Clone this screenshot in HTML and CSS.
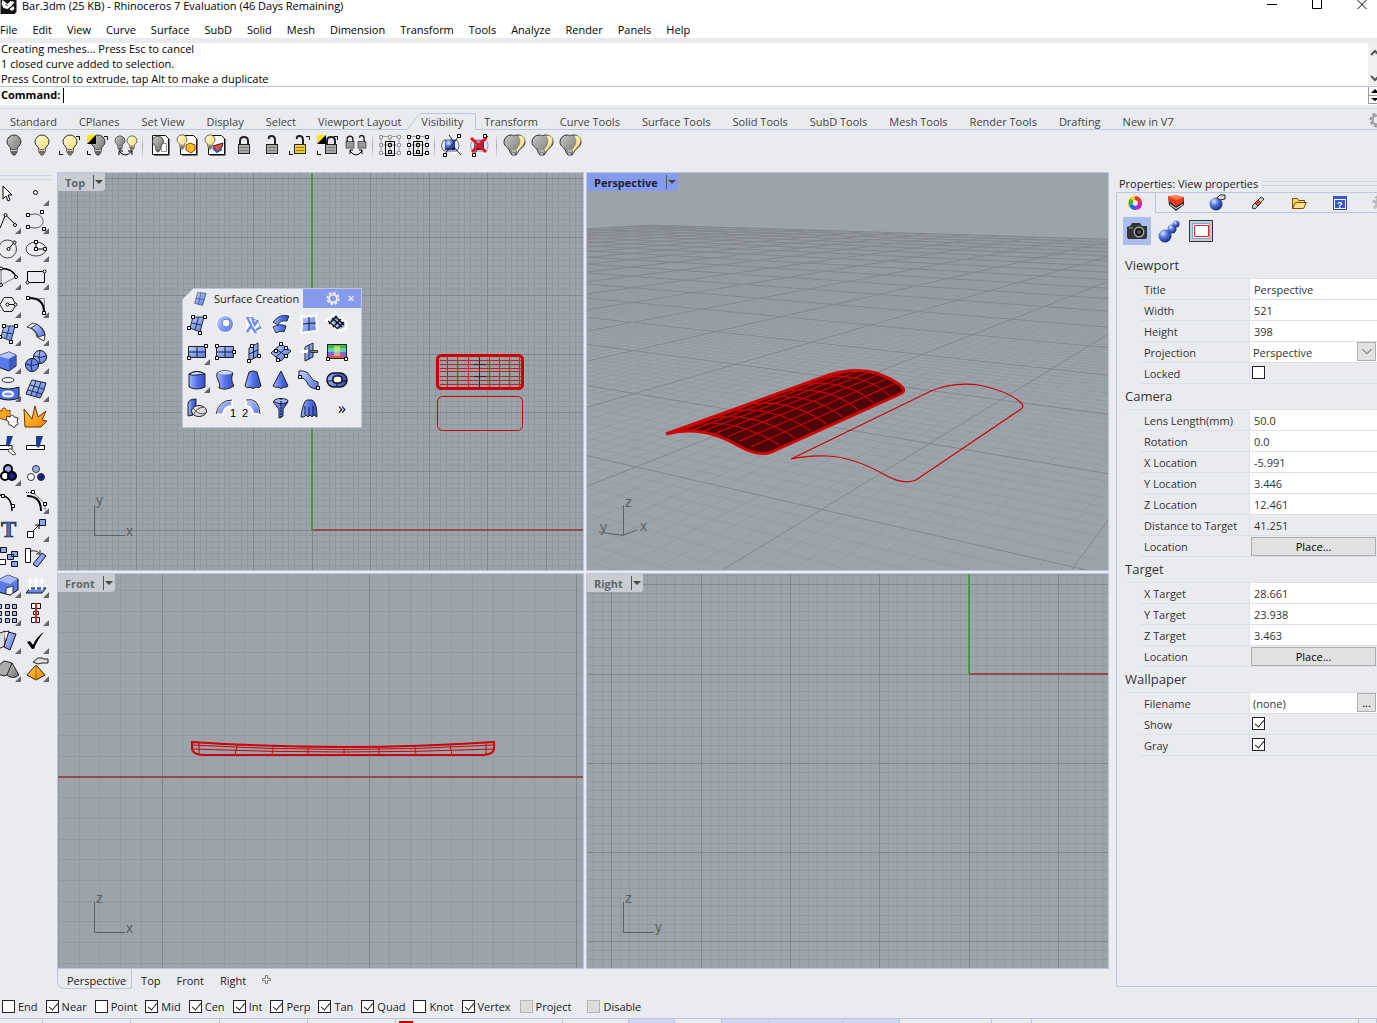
FILE: index.html
```html
<!DOCTYPE html>
<html lang="en">
<head>
<meta charset="utf-8">
<title>Bar.3dm (25 KB) - Rhinoceros 7 Evaluation</title>
<link rel="stylesheet" href="styles.css">
</head>
<body>
<svg class="defs" aria-hidden="true">
  <defs>
    <linearGradient id="blue" x1="0" y1="0" x2="1" y2="1"><stop offset="0" stop-color="#c3d0ff"/><stop offset="1" stop-color="#5474e6"/></linearGradient>
    <linearGradient id="deep" x1="0" y1="0" x2="1" y2="0"><stop offset="0" stop-color="#a5b8ff"/><stop offset=".5" stop-color="#5573e8"/><stop offset="1" stop-color="#314fc0"/></linearGradient>
    <linearGradient id="gray" x1="0" y1="0" x2="1" y2="1"><stop offset="0" stop-color="#c8c8c8"/><stop offset="1" stop-color="#6c6c6c"/></linearGradient>
    <linearGradient id="pale" x1="0" y1="0" x2="1" y2="1"><stop offset="0" stop-color="#fffbe0"/><stop offset="1" stop-color="#ffd65c"/></linearGradient>
    <linearGradient id="orange" x1="0" y1="0" x2="1" y2="1"><stop offset="0" stop-color="#ffd24a"/><stop offset="1" stop-color="#f08000"/></linearGradient>
    <radialGradient id="ball" cx=".35" cy=".3" r=".8"><stop offset="0" stop-color="#e3eaff"/><stop offset=".4" stop-color="#5577dd"/><stop offset="1" stop-color="#0b1c70"/></radialGradient>
  </defs>
  <symbol id="bulb" viewBox="0 0 28 28"><path d="M14 4a7 7 0 0 1 7 7c0 4-4 4-4 8v2l-2 3h-2l-2-3v-2c0-4-4-4-4-8a7 7 0 0 1 7-7z" stroke="#333"/><path d="M11.500 18h5v3l-2 2h-1l-2-2z" fill="#666"/><path d="M11 19.500h6" stroke="#ccc"/></symbol>
  <symbol id="lock" viewBox="0 0 28 28"><path d="M10 14v-4q0-4 4-4t4 4v4" fill="none" stroke="#222" stroke-width="2"/><rect x="8.500" y="13.500" width="11" height="9" stroke="#222"/><path d="M10 16.500h8m-8 3h8" stroke="#777"/></symbol>
  <symbol id="unlock" viewBox="0 0 28 28"><path d="M17 14V9q0-4-3.500-4T11 8" fill="none" stroke="#222" stroke-width="2"/><rect x="8.500" y="13.500" width="11" height="9" stroke="#222"/><path d="M10 16.500h8m-8 3h8" stroke="#777"/></symbol>
  <symbol id="sheet" viewBox="0 0 28 28"><path d="M6.500 4.500h13l3 3v16h-16z" fill="#fff" stroke="#111"/><path d="M23.500 8v16.500H8" fill="none" stroke="#777"/></symbol>
  <symbol id="tri" viewBox="0 0 28 28"><path d="M27 21v6h-6z" fill="#666"/></symbol>
  <symbol id="corners" viewBox="0 0 28 28"><path d="M3.500 20v3.500H7M20 5.500h3.500V9" fill="none" stroke="#000"/></symbol>
  <symbol id="srf" viewBox="0 0 28 28"><path d="M10 7h11l-4 15-10-4z" fill="url(#blue)" stroke="#333"/><path d="M15.500 7L12 20M8.500 13l10 2" stroke="#234"/><g fill="#fff" stroke="#000"><path d="M8.500 5.500h3v3h-3zM20.500 5.500h3v3h-3zM15.500 21.500h3v3h-3zM4.500 16.500h3v3h-3z"/></g></symbol>
  <symbol id="two" viewBox="0 0 28 28"><path d="M11 4a7 7 0 0 0-7 7c0 5 5 5 6 10l2 3h4l2-3c1-3 7-5 7-10a7 7 0 0 0-7-7c-3 0-4 1-4 1s-1-1-3-1z" fill="url(#gray)" stroke="#333"/><path d="M18 4.500c9-1 8 8 3 12l-4 5-1-3c3-4 6-7 2-14z" fill="url(#pale)" stroke="#665" stroke-width=".5"/><path d="M12 20h4M12 23h3" stroke="#ddd"/></symbol>
  <symbol id="gear" viewBox="0 0 16 16"><circle cx="8" cy="8" r="6.500" fill="none" stroke-width="2" stroke-dasharray="3 2"/><circle cx="8" cy="8" r="4.500" fill="none" stroke-width="2"/></symbol>
</svg>

<header class="titlebar">
  <svg class="logo" viewBox="0 0 16 14"><path d="M0 0h16v12l-2 2H0z" fill="#111"/><path d="M2 0l5 4 3-3 4 1-3 4-4 3-4-1-2-4zM9 9l4-3 1 3-3 2z" fill="#fff"/><path d="M5 4l2 2" stroke="#111"/></svg>
  <h1>Bar.3dm (25 KB) - Rhinoceros 7 Evaluation (46 Days Remaining)</h1>
  <div class="winbtns">
    <button aria-label="Minimize"><svg viewBox="0 0 12 12"><path d="M1 4.500h10"/></svg></button>
    <button aria-label="Maximize"><svg viewBox="0 0 12 12"><path d="M1.500 0v8.500h9V0"/></svg></button>
    <button aria-label="Close"><svg viewBox="0 0 12 12"><path d="M1.500 0l9 9M10.500 0l-9 9"/></svg></button>
  </div>
</header>
<nav class="menu">
  <a href="#">File</a><a href="#">Edit</a><a href="#">View</a><a href="#">Curve</a><a href="#">Surface</a><a href="#">SubD</a><a href="#">Solid</a><a href="#">Mesh</a><a href="#">Dimension</a><a href="#">Transform</a><a href="#">Tools</a><a href="#">Analyze</a><a href="#">Render</a><a href="#">Panels</a><a href="#">Help</a>
</nav>
<section class="command">
  <div class="history">
    <div class="log"><p>Creating meshes... Press Esc to cancel</p><p>1 closed curve added to selection.</p><p>Press Control to extrude, tap Alt to make a duplicate</p></div>
    <div class="scroll"><svg viewBox="0 0 9 43"><path d="M3 12l4-4 4 4M3 33l4 4 4-4" fill="none" stroke="#555" stroke-width="2"/></svg></div>
  </div>
  <div class="prompt"><label for="cmd">Command:</label><span class="caret"></span><input id="cmd" type="text"><svg class="spin" viewBox="0 0 9 17"><path d="M.500 0v16.500H9M0 8.500h9" fill="none" stroke="#999"/><path d="M3 6l4-4 4 4zM3 11h8l-4 3z"/></svg></div>
</section>
<nav class="tabs">
  <a href="#">Standard</a><a href="#">CPlanes</a><a href="#">Set View</a><a href="#">Display</a><a href="#">Select</a><a href="#">Viewport Layout</a><a href="#" class="active"><svg viewBox="0 0 14 17" class="slant"><path d="M0 17L14 0v17z" fill="#eaebef"/><path d="M0 16.500L13 .500" stroke="#bcc5de"/></svg>Visibility</a><a href="#">Transform</a><a href="#">Curve Tools</a><a href="#">Surface Tools</a><a href="#">Solid Tools</a><a href="#">SubD Tools</a><a href="#">Mesh Tools</a><a href="#">Render Tools</a><a href="#">Drafting</a><a href="#">New in V7</a>
  <svg class="tabgear" viewBox="0 0 16 16" stroke="#999"><use href="#gear"/></svg>
</nav>
<div class="toolbar">
  <button aria-label="Hide"><svg viewBox="0 0 28 28" fill="url(#gray)"><use href="#bulb"/></svg></button>
  <button aria-label="Show"><svg viewBox="0 0 28 28" fill="url(#pale)"><use href="#bulb"/></svg></button>
  <button aria-label="Show selected"><svg viewBox="0 0 28 28" fill="url(#pale)"><use href="#bulb"/><use href="#corners"/></svg></button>
  <button aria-label="Invert hide"><svg viewBox="0 0 28 28" fill="url(#gray)"><use href="#bulb"/><use href="#corners"/><path d="M3 4h9l-9 9z" fill="#ffe600"/><path d="M12 4v9H3z" fill="#000"/></svg></button>
  <button aria-label="Swap hidden"><svg viewBox="0 0 28 28"><use href="#bulb" width="20" height="20" x="-2" y="2" fill="url(#gray)"/><use href="#bulb" width="20" height="20" x="10" y="2" fill="url(#pale)"/><path d="M7 20q6 8 13 0M7 24v-4h4M20 24v-4h-4" fill="none" stroke="#000"/></svg></button>
  <i class="sep"></i>
  <button aria-label="Hide in detail"><svg viewBox="0 0 28 28" fill="url(#gray)"><use href="#sheet"/><path d="M15.500 12.500h5v8h-5z" fill="none" stroke="#999"/><use href="#bulb" width="22" height="22" x="1" y="2"/></svg></button>
  <button aria-label="Show in detail"><svg viewBox="0 0 28 28" fill="url(#pale)"><use href="#sheet"/><use href="#bulb" width="20" height="20" x="-2" y="1"/><path d="M12 14l4-2 5 2v5l-4 3-5-3z" fill="#ffc020" stroke="#840"/></svg></button>
  <button aria-label="Hide layers in detail"><svg viewBox="0 0 28 28" fill="url(#pale)"><use href="#sheet"/><use href="#bulb" width="20" height="20" x="-2" y="1"/><path d="M11 15l10-3-1 4-5 5z" fill="#f05030" stroke="#223"/><path d="M11 17l4 4 5-3" fill="none" stroke="#35c" stroke-width="2"/></svg></button>
  <button aria-label="Lock"><svg viewBox="0 0 28 28" fill="#aaa"><use href="#lock"/></svg></button>
  <button aria-label="Unlock"><svg viewBox="0 0 28 28" fill="#aaa"><use href="#unlock"/></svg></button>
  <button aria-label="Unlock selected"><svg viewBox="0 0 28 28" fill="#ffd000"><use href="#unlock"/><use href="#corners"/></svg></button>
  <button aria-label="Invert lock"><svg viewBox="0 0 28 28" fill="#aaa"><use href="#lock" x="3"/><use href="#corners"/><path d="M3 4h9l-9 9z" fill="#ffe600"/><path d="M12 4v9H3z" fill="#000"/></svg></button>
  <button aria-label="Swap locked"><svg viewBox="0 0 28 28" fill="#aaa"><use href="#lock" width="20" height="20" x="-2" y="1"/><use href="#unlock" width="20" height="20" x="10" y="1"/><path d="M8 20q6 8 12 0M8 23v-4h3M20 23v-4h-3" fill="none" stroke="#000"/></svg></button>
  <i class="sep"></i>
  <button aria-label="Hide points"><svg viewBox="0 0 28 28" fill="none" stroke="#999"><path d="M5 5.500h18v17H5zM5 14h18M14 5v17"/><path d="M3.500 4.500h3v3h-3zM12.500 4.500h3v3h-3zM21.500 4.500h3v3h-3zM3.500 12.500h3v3h-3zM21.500 12.500h3v3h-3zM3.500 20.500h3v3h-3zM21.500 20.500h3v3h-3z" fill="#eee"/><path d="M9.500 10.500h9v14h-9zM12.500 12.500h3v3h-3zM12.500 19.500h3v3h-3z" stroke="#000"/></svg></button>
  <button aria-label="Show points"><svg viewBox="0 0 28 28" fill="none" stroke="#999"><path d="M5 5.500h18v17H5zM5 14h18M14 5v17"/><path d="M3.500 4.500h3v3h-3zM12.500 4.500h3v3h-3zM21.500 4.500h3v3h-3zM3.500 12.500h3v3h-3zM21.500 12.500h3v3h-3zM3.500 20.500h3v3h-3zM21.500 20.500h3v3h-3z" fill="#fff" stroke="#000"/><path d="M9.500 10.500h9v14h-9zM12.500 12.500h3v3h-3zM12.500 19.500h3v3h-3z" stroke="#000"/></svg></button>
  <i class="sep"></i>
  <button aria-label="Isolate"><svg viewBox="0 0 28 28"><path d="M15 4v20l7-4V8z" fill="#f8f8fb"/><path d="M6 9h13q4 5 0 11H6q-5-5 0-11z" fill="#dfe6f5" stroke="#667"/><rect x="7" y="9" width="10" height="10" fill="url(#ball)"/><path d="M7 23L21 5M16 16l7 8M15 10l-4-6" stroke="#222"/><path d="M19.500 3.500h3v3h-3zM5.500 22.500h3v3h-3z" fill="#fff" stroke="#000"/></svg></button>
  <button aria-label="Unisolate"><svg viewBox="0 0 28 28"><path d="M7 9h13q4 5 0 11H7q-5-5 0-11z" fill="#dfe6f5" stroke="#99a"/><rect x="8" y="9" width="10" height="10" fill="url(#ball)"/><path d="M8 23L22 5" stroke="#222"/><path d="M17.500 3.500h3v3h-3zM6.500 22.500h3v3h-3z" fill="#fff" stroke="#000"/><path d="M5 7l15 14M20 7L6 21" stroke="#f01010" stroke-width="3"/></svg></button>
  <i class="sep"></i>
  <button aria-label="Hide swap 1"><svg viewBox="0 0 28 28"><use href="#two"/></svg></button>
  <button aria-label="Hide swap 2"><svg viewBox="0 0 28 28"><use href="#two"/></svg></button>
  <button aria-label="Hide swap 3"><svg viewBox="0 0 28 28"><use href="#two"/></svg></button>
</div>

<main class="work">
  <aside class="tools">
    <button aria-label="Select"><svg viewBox="0 0 28 28"><path d="M9 7v13l3-3 2 5 2-1-2-5h4z" fill="#fff" stroke="#000"/></svg></button>
    <button aria-label="Point"><svg viewBox="0 0 28 28"><circle cx="13.500" cy="13.500" r="2" fill="#fff" stroke="#000"/><use href="#tri"/></svg></button>
    <button aria-label="Polyline"><svg viewBox="0 0 28 28" fill="#fff" stroke="#000"><path d="M6 21l5.500-13L22 18" fill="none"/><circle cx="11.500" cy="8" r="1.500"/><circle cx="21" cy="18" r="1.500"/><use href="#tri" stroke="none"/></svg></button>
    <button aria-label="Curve"><svg viewBox="0 0 28 28" fill="#fff" stroke="#000"><path d="M6 8l6-1c10-1 14 14 0 14l-6-1" fill="none" stroke="#555"/><path d="M4.500 6.500h3v3h-3zM18.500 3.500h3v3h-3zM4.500 18.500h3v3h-3zM20.500 20.500h3v3h-3z"/><use href="#tri" stroke="none"/></svg></button>
    <button aria-label="Circle"><svg viewBox="0 0 28 28" fill="#fff" stroke="#000"><circle cx="13.500" cy="14" r="9" fill="none" stroke="#444"/><path d="M14.500 14l6-7"/><circle cx="14.500" cy="14" r="1.500"/><circle cx="20.500" cy="7.500" r="1.500"/><use href="#tri" stroke="none"/></svg></button>
    <button aria-label="Ellipse"><svg viewBox="0 0 28 28" fill="#fff" stroke="#000"><ellipse cx="14" cy="14" rx="10" ry="7" fill="none" stroke="#444"/><path d="M14 7v7h9"/><path d="M12.500 5.500h3v3h-3zM12.500 12.500h3v3h-3zM21.500 12.500h3v3h-3z"/><use href="#tri" stroke="none"/></svg></button>
    <button aria-label="Arc"><svg viewBox="0 0 28 28" fill="#fff" stroke="#000"><path d="M22 14L7 22V5" fill="none" stroke="#777"/><path d="M7 5.500q12 0 15 8.500" fill="none" stroke-width="1.500"/><circle cx="7" cy="5.500" r="1.500"/><circle cx="22" cy="14" r="1.500"/><circle cx="7" cy="22" r="1.500"/><use href="#tri" stroke="none"/></svg></button>
    <button aria-label="Rectangle"><svg viewBox="0 0 28 28" fill="#fff" stroke="#000"><path d="M5.500 8.500h17v11h-17z" fill="none"/><circle cx="22.500" cy="8.500" r="1.500"/><circle cx="5.500" cy="19.500" r="1.500"/><use href="#tri" stroke="none"/></svg></button>
    <button aria-label="Polygon"><svg viewBox="0 0 28 28" fill="#fff" stroke="#000"><path d="M6 13.500l4-7h8l4 7-4 7h-8z" fill="none" stroke="#222"/><path d="M14 13.500h7"/><circle cx="13.500" cy="13.500" r="1.500"/><circle cx="21.500" cy="13.500" r="1.500"/><use href="#tri" stroke="none"/></svg></button>
    <button aria-label="Fillet"><svg viewBox="0 0 28 28" fill="#fff" stroke="#000"><path d="M12 7.500h10.500V18" fill="none" stroke="#888"/><path d="M7 7q15 0 15 14" fill="none" stroke-width="2"/><path d="M4.500 5.500h3v3h-3zM20.500 20.500h3v3h-3z"/><use href="#tri" stroke="none"/></svg></button>
    <button aria-label="Surface"><svg viewBox="0 0 28 28"><use href="#srf"/><use href="#tri"/></svg></button>
    <button aria-label="Sweep"><svg viewBox="0 0 28 28"><path d="M5 8l6-4q12 4 12 12l-1 6-7-4q-1-8-10-10z" fill="#fff" stroke="#333"/><path d="M9 9l6-4q6 4 8 11l-7 2q-1-6-7-9z" fill="url(#blue)" stroke="#333"/><use href="#tri"/></svg></button>
    <button aria-label="Solid"><svg viewBox="0 0 28 28"><path d="M4 9l11-4 7 3v11l-7 5-11-4z" fill="#5b7bea" stroke="#111"/><path d="M4 9l11-4 7 3-7 4z" fill="#b9c7ff"/><path d="M15 12l7-4v11l-7 5z" fill="#3d59c4"/><use href="#tri"/></svg></button>
    <button aria-label="Boolean"><svg viewBox="0 0 28 28" stroke="#111"><circle cx="18" cy="10" r="6.500" fill="url(#blue)"/><circle cx="10" cy="18" r="6.500" fill="#6c88f0"/><path d="M4 17q6 3 12 0M10 12q-2 6 0 12M12 9q6 3 12 0M18 4q-2 6 0 12" stroke-width=".8" fill="none"/><use href="#tri" stroke="none"/></svg></button>
    <button aria-label="Project"><svg viewBox="0 0 28 28"><ellipse cx="14" cy="5" rx="6" ry="2.500" fill="none" stroke="#333"/><path d="M4 12q10 4 21 0v11q-10 4-21 0z" fill="#4d6fe2" stroke="#111"/><ellipse cx="14" cy="19" rx="5" ry="2.500" fill="#7e9aff" stroke="#fff" stroke-width="2"/><use href="#tri"/></svg></button>
    <button aria-label="Mesh"><svg viewBox="0 0 28 28"><path d="M10 5l14 3q-2 9-6 15L4 19q3-8 6-14z" fill="url(#blue)" stroke="#222"/><path d="M8 10l14 4M6 15l14 4M14 6L9 20M19 7l-5 14" stroke="#234"/><use href="#tri"/></svg></button>
    <button aria-label="Join"><svg viewBox="0 0 28 28"><path d="M4 7l4 1q0-5 4-2l1 2 3-1v5q4 2 0 4l-4 1-8-2z" fill="#ffa61a" stroke="#843"/><path d="M13 13l3 1q3-4 4 0l4 1-1 4q3 3-1 3l-2 3-3-3q-4 0-2-3l-3-2z" fill="#fff" stroke="#333"/></svg></button>
    <button aria-label="Explode"><svg viewBox="0 0 28 28"><path d="M3 24L2 6l8 10 3-13 3 11 8-6-4 9 5 1-6 6z" fill="url(#orange)" stroke="#732d00"/></svg></button>
    <button aria-label="Trim"><svg viewBox="0 0 28 28"><path d="M4 14.500h14v4H4z" fill="#fff" stroke="#000"/><path d="M16 17l6 6-3 1-5-4z" fill="#eee" stroke="#555"/><path d="M13 5h6l-4 11-3-2z" fill="#1c3a92"/></svg></button>
    <button aria-label="Split"><svg viewBox="0 0 28 28"><path d="M4.500 14.500h18v4h-18z" fill="#fff" stroke="#000"/><path d="M14 5h7l-4 12-3-2z" fill="#1c3a92"/></svg></button>
    <button aria-label="Group"><svg viewBox="0 0 28 28" stroke="#000" stroke-width="2"><circle cx="14" cy="10" r="4" fill="#9daaf0"/><circle cx="11" cy="17" r="4" fill="#fff"/><circle cx="18" cy="17" r="4" fill="#1a1e8c"/><use href="#tri" stroke="none"/></svg></button>
    <button aria-label="Ungroup"><svg viewBox="0 0 28 28" stroke="#333"><circle cx="14" cy="10" r="3.500" fill="#9daaf0"/><circle cx="9" cy="18" r="3.500" fill="#fff"/><circle cx="19" cy="18" r="3.500" fill="#1a1e8c"/></svg></button>
    <button aria-label="Edit points"><svg viewBox="0 0 28 28" fill="#fff" stroke="#000"><path d="M4 8q14 0 14 16" fill="none" stroke-width="1.500"/><path d="M7.500 7.500h3v3h-3zM17.500 17.500h3v3h-3z"/></svg></button>
    <button aria-label="Control points"><svg viewBox="0 0 28 28" fill="#fff" stroke="#000"><path d="M5 9q14 0 14 15" fill="none" stroke-width="2"/><path d="M4 5.500h7l12 11v7" fill="none" stroke-dasharray="1 1"/><path d="M9.500 3.500h3v3h-3zM21.500 15.500h3v3h-3z"/><use href="#tri" stroke="none"/></svg></button>
    <button aria-label="Text"><svg viewBox="0 0 28 28"><text x="7" y="22" class="bigt">T</text></svg></button>
    <button aria-label="Move"><svg viewBox="0 0 28 28"><path d="M17.500 4.500h6v6h-6z" fill="#8ea4fa" stroke="#111"/><path d="M5.500 16.500h6v6h-6z" fill="#fff" stroke="#111"/><path d="M11 16l6-6m-4 0h4v4" fill="none" stroke="#000"/><use href="#tri"/></svg></button>
    <button aria-label="Copy"><svg viewBox="0 0 28 28" stroke="#111" fill="#8ea4fa"><path d="M6.500 4.500h6v5h-6zM13.500 11.500h6v5h-6zM17.500 8.500h6v5h-6zM17.500 18.500h6v5h-6z"/><path d="M5.500 16.500h6v5h-6z" fill="#fff"/></svg></button>
    <button aria-label="Rotate"><svg viewBox="0 0 28 28"><path d="M3.500 5.500h5v14h-5z" fill="#fff" stroke="#111"/><path d="M20 10l4 3-9 11-4-3z" fill="#8ea4fa" stroke="#111"/><path d="M9 8q6-1 9 3m-4 0h4V7" fill="none" stroke="#222"/></svg></button>
    <button aria-label="Scale"><svg viewBox="0 0 28 28"><path d="M4 9l10-5 10 4v11l-8 5-12-3z" fill="#5b7bea" stroke="#111"/><path d="M4 9l10-5 10 4-8 5z" fill="#a9baff"/><path d="M12 17l7-2v7l-3 2-4-1z" fill="#fff" stroke="#333"/><use href="#tri"/></svg></button>
    <button aria-label="Project to plane"><svg viewBox="0 0 28 28"><path d="M8 17h16l-4 5H4z" fill="#6685ee" stroke="#123"/><path d="M8 19V8M14 19V8M20 19V8M6 11l2-3 2 3M12 11l2-3 2 3M18 11l2-3 2 3" fill="none" stroke="#fff" stroke-width="2"/><use href="#tri"/></svg></button>
    <button aria-label="Array"><svg viewBox="0 0 28 28" fill="#a8b8fb" stroke="#111"><path d="M3.500 5.500h4v4h-4zM11.500 5.500h4v4h-4zM18.500 5.500h4v4h-4zM3.500 12.500h4v4h-4zM11.500 12.500h4v4h-4zM18.500 12.500h4v4h-4zM3.500 19.500h4v4h-4zM11.500 19.500h4v4h-4zM18.500 19.500h4v4h-4z"/><use href="#tri" stroke="none"/></svg></button>
    <button aria-label="Align"><svg viewBox="0 0 28 28" fill="#fff" stroke="#111"><path d="M9.500 4.500h9v5h-9zM11.500 12.500h5v3h-5zM9.500 18.500h8v5h-8z"/><path d="M14 4v20" stroke="#d22" stroke-width="2"/><use href="#tri" stroke="none"/></svg></button>
    <button aria-label="Cage edit"><svg viewBox="0 0 28 28"><path d="M4 7l7-3v15l-7 3z" fill="#ddd" stroke="#222"/><path d="M14 5l8 2-6 16-6-3z" fill="url(#blue)" stroke="#111"/><path d="M10 5l5-1-3 10" fill="#fff" stroke="#222"/><use href="#tri"/></svg></button>
    <button aria-label="Check"><svg viewBox="0 0 28 28"><path d="M5 15l3-1 3 4Q15 9 22 5q-7 8-10 17h-2z"/><use href="#tri"/></svg></button>
    <button aria-label="Render shapes"><svg viewBox="0 0 28 28" stroke="#222"><path d="M4 11l6-5 8 2v10l-8 3-6-2z" fill="#aaa"/><path d="M18 8l7 12q-6 5-12 0z" fill="url(#gray)"/><use href="#tri" stroke="none"/></svg></button>
    <button aria-label="Options"><svg viewBox="0 0 28 28" stroke="#222"><path d="M14 10l9 10-9 5-9-5z" fill="url(#orange)"/><path d="M14 10v15" stroke="#a60"/><path d="M11 7l5-4h4l2 1h4v4h-6l-4 1z" fill="#ddd"/><use href="#tri" stroke="none"/></svg></button>
  </aside>

  <div class="center">
    <div class="views">
      <section class="view">
        <svg class="canvas" data-grid="top"></svg>
        <svg class="canvas">
          <g fill="none" stroke="#cc0000"><rect x="379.500" y="182.500" width="85" height="33" rx="4" stroke-width="3"/><path d="M382 187h82M382 191h82M382 195h82M382 198h82M382 203h82M382 207h82M382 211h82M382 214h82M389 183v33M399 183v33M410 183v33M431 183v33M441 183v33M451 183v33M461 183v33" shape-rendering="crispEdges" opacity=".8"/><path d="M421.500 183v33M416 191.500h12M416 203.500h12" stroke="#511"/><rect x="379.500" y="223.500" width="85" height="34" rx="5"/></g>
          <g class="axis"><path d="M36.500 332v30.500H67"/><text x="38" y="332">y</text><text x="68" y="363">x</text></g>
        </svg>
        <div class="vtitle"><b>Top</b><i></i><span></span></div>
        <div class="palette">
          <div class="phead"><div class="ptab"><svg viewBox="0 0 28 28"><path d="M12 5l12 1-5 17-11-3z" fill="url(#blue)" stroke="#456"/><path d="M17 5l-4 17M10 13l12 2" stroke="#456"/></svg>Surface Creation</div><button aria-label="Palette options"><svg viewBox="0 0 16 16" stroke="#f3efe0"><use href="#gear"/></svg></button><button aria-label="Close palette">×</button></div>
          <div class="pgrid">
            <button aria-label="Corner points"><svg viewBox="0 0 28 28"><use href="#srf"/></svg></button>
            <button aria-label="Planar curves"><svg viewBox="0 0 28 28"><circle cx="14" cy="14" r="9" fill="#fff"/><circle cx="14" cy="14" r="8" fill="url(#blue)"/><circle cx="15" cy="13" r="4" fill="#fff" stroke="#5a76dd"/></svg></button>
            <button aria-label="Curve network"><svg viewBox="0 0 28 28"><path d="M7 5q14 1 16 14l-7 5-9-5z" fill="#fff"/><path d="M8 7l4 8M13 7l2 7M19 10l-4 6M8 22l4-6 5 7M22 17l-5 3" stroke="#6f8cf0" stroke-width="2.500" fill="none"/><path d="M8 7q12 1 14 12" fill="none" stroke="#89a"/></svg></button>
            <button aria-label="Loft"><svg viewBox="0 0 28 28"><path d="M7 12q8-9 15-6l-2 5q-7-1-9 4zM6 19q6-4 9-3l1 7q-4-2-7 0z" fill="#fff" stroke="#fff" stroke-width="3"/><path d="M6 12q7-9 16-6l-2 5q-7-1-9 4zM6 17q7-4 13-1l-2 6q-4-2-8 1z" fill="url(#deep)" stroke="#234"/></svg></button>
            <button aria-label="Edge curves"><svg viewBox="0 0 28 28"><path d="M6 6q7 2 15-1 0 9 1 16-8 0-16 2 2-9 0-17z" fill="url(#blue)" stroke="#fff" stroke-width="2"/><path d="M14 7v14M8 14q7-1 13-1" fill="none" stroke="#123"/></svg></button>
            <button aria-label="Patch"><svg viewBox="0 0 28 28"><path d="M4 10l7-5 12 7v6l-6 3z" fill="#9db0ff" stroke="#fff" stroke-width="3"/><path d="M5 11l10 8M9 8l10 9M12 6l9 9M6 14l8-8M10 17l8-8M14 19l7-7" fill="none" stroke="#111" stroke-width="1.500"/></svg></button>

            <button aria-label="Plane"><svg viewBox="0 0 28 28"><path d="M5.500 8.500h17v11h-17z" fill="url(#blue)" stroke="#222"/><path d="M14 9v11M6 14h17" stroke="#123"/><path d="M4.500 18.500h3v3h-3zM21.500 6.500h3v3h-3z" fill="#fff" stroke="#000"/><use href="#tri"/></svg></button>
            <button aria-label="Three point plane"><svg viewBox="0 0 28 28"><path d="M5.500 8.500h17v11h-17z" fill="url(#blue)" stroke="#222"/><path d="M14 9v11M6 14h17" stroke="#123"/><path d="M4.500 18.500h3v3h-3zM4.500 6.500h3v3h-3zM21.500 12.500h3v3h-3z" fill="#fff" stroke="#000"/></svg></button>
            <button aria-label="Vertical plane"><svg viewBox="0 0 28 28"><path d="M10 10l9-5v13l-9 5z" fill="url(#blue)" stroke="#222"/><path d="M14.500 8v13M10 16l9-4" stroke="#123"/><path d="M8.500 21.500h3v3h-3zM11.500 6.500h3v3h-3zM18.500 16.500h3v3h-3z" fill="#fff" stroke="#000"/></svg></button>
            <button aria-label="Plane through points"><svg viewBox="0 0 28 28"><path d="M4 15l10-9 10 7-10 10z" fill="url(#blue)" stroke="#222"/><path d="M9 11l10 7M9 19l10-9" stroke="#123"/><path d="M12.500 4.500h3v3h-3zM7.500 11.500h3v3h-3zM17.500 8.500h3v3h-3zM17.500 16.500h3v3h-3zM9.500 20.500h3v3h-3z" fill="#fff" stroke="#000"/></svg></button>
            <button aria-label="Cutting plane"><svg viewBox="0 0 28 28"><path d="M10 9l8-4v14l-8 4z" fill="url(#blue)" stroke="#222"/><path d="M14 7v14" stroke="#123"/><path d="M5 12h8v3H5z" fill="#fff"/><path d="M15.500 12.500h7v2h-7z" fill="#888" stroke="#333"/></svg></button>
            <button aria-label="Picture"><svg viewBox="0 0 28 28"><path d="M4 6h20v4H4z" fill="#41b83c"/><path d="M4 10h20v4H4z" fill="#5fcfc0"/><path d="M4 14h20v4H4z" fill="#8a62d8"/><path d="M4 18h20v3H4z" fill="#df5a32"/><path d="M11 8h6v10h-6z" fill="#f4ee6a" opacity=".6"/><path d="M4.500 6.500h19v14h-19z" fill="none" stroke="#222"/><path d="M3.500 19.500h3v3h-3zM21.500 19.500h3v3h-3z" fill="#fff" stroke="#000"/></svg></button>

            <button aria-label="Extrude straight"><svg viewBox="0 0 28 28"><path d="M6 8q8-5 16 0v13q-8 4-16 0z" fill="url(#deep)" stroke="#222"/><path d="M6 8q3 2 8 1t8-1q-8-5-16 0" fill="#cdd8ff" stroke="#222"/><use href="#tri"/></svg></button>
            <button aria-label="Extrude along curve"><svg viewBox="0 0 28 28"><path d="M6 7q8-5 16 0-3 7 1 13-8 5-15 2 2-4-1-8-2-3-1-7z" fill="url(#deep)" stroke="#222"/><path d="M6 7q8 3 16 0-8-5-16 0" fill="#cdd8ff"/></svg></button>
            <button aria-label="Extrude tapered"><svg viewBox="0 0 28 28"><path d="M10 6q4-2 8 0l4 14q-2 3-5 1-3 3-6 0-3 2-5-1z" fill="url(#deep)" stroke="#222"/></svg></button>
            <button aria-label="Extrude to point"><svg viewBox="0 0 28 28"><path d="M14 5l7 15q-2 2-4 1-3 3-6 0-3 1-5-1z" fill="url(#deep)" stroke="#222"/></svg></button>
            <button aria-label="Ribbon"><svg viewBox="0 0 28 28"><path d="M4 5q8-1 11 5t8 6v7q-9 0-11-7-2-4-8-5z" fill="url(#blue)" stroke="#222"/><path d="M3.500 9.500h3v3h-3zM21.500 20.500h3v3h-3z" fill="#fff" stroke="#000"/></svg></button>
            <button aria-label="Torus"><svg viewBox="0 0 28 28"><rect x="4" y="7" width="20" height="14" rx="7" fill="url(#deep)" stroke="#111" stroke-width="1.500"/><rect x="10" y="10" width="9" height="7" rx="3" fill="#fff" stroke="#111" stroke-width="1.500"/><path d="M4 15h6M19 15h5M14 17v4" stroke="#111"/></svg></button>

            <button aria-label="Sweep blob"><svg viewBox="0 0 28 28"><path d="M5 22V10q0-5 8-5v6q-3 1-3 10z" fill="url(#deep)" stroke="#222"/><ellipse cx="16" cy="17" rx="7.500" ry="5.500" fill="#ddd" stroke="#222"/><path d="M10 14q6 8 12 5M11 20q2-6 10-7" fill="none" stroke="#555"/></svg></button>
            <button aria-label="Sweep one rail"><svg viewBox="0 0 28 28"><path d="M5 20q3-14 16-14v6q-8 0-9 9z" fill="url(#blue)" stroke="#fff" stroke-width="2"/><path d="M5 20q3-14 16-14" fill="none" stroke="#222"/><text x="19" y="23">1</text></svg></button>
            <button aria-label="Sweep two rails"><svg viewBox="0 0 28 28"><path d="M7 6q13-3 14 14h-7q-1-8-7-8z" fill="url(#blue)" stroke="#fff" stroke-width="2"/><path d="M7 6q13-3 14 14" fill="none" stroke="#222"/><text x="3" y="23">2</text></svg></button>
            <button aria-label="Revolve"><svg viewBox="0 0 28 28"><path d="M6 8q8-5 15 0l-5 7v7l-4 2v-9z" fill="url(#deep)" stroke="#222"/><ellipse cx="14" cy="7" rx="7" ry="2.500" fill="#9fb3ff" stroke="#222"/><path d="M14 4v20" stroke="#000" stroke-dasharray="2 1"/></svg></button>
            <button aria-label="Drape"><svg viewBox="0 0 28 28"><path d="M6 23q2-16 6-17h5q5 2 5 17l-3-2-2 2-2-2-2 2-2-2-2 2z" fill="url(#deep)" stroke="#222"/><path d="M10 12v9M14 13v9M18 12v9" stroke="#123"/></svg></button>
            <button aria-label="More">»</button>
          </div>
        </div>
      </section>
      <section class="view">
        <svg class="canvas" viewBox="0 0 521 398" preserveAspectRatio="xMidYMid slice" data-grid="perspective"></svg>
        <svg class="canvas">
          <g id="slab"></g>
          <path d="M204 286L344 218Q368 208 394 212.500Q424 219 435 231Q437 234 434 236L329 307Q317 312 300 303Q267 284 240 283Q223 282 204 286z" fill="none" stroke="#cc0000" stroke-width="1.200"/>
          <g class="axis"><path d="M36.500 332v30.500L12 359M36.500 362L50 357"/><text x="38" y="334">z</text><text x="13" y="359">y</text><text x="53" y="358">x</text></g>
        </svg>
        <div class="vtitle current"><b>Perspective</b><i></i><span></span></div>
      </section>
      <section class="view">
        <svg class="canvas" data-grid="front"></svg>
        <svg class="canvas">
          <g fill="none" stroke="#cc0000"><path d="M134 168q152 10 302 0v6q0 7-14 7H148q-14 0-14-7z" stroke-width="2"/><path d="M134 171q152 9 302 0M134 175q152 6 302 0M141 168v12M179 171l-2 10M215 173l-1 8M250 174v7M286 174v7M321 174v7M357 172l1 9M392 170l2 11M428 168v12"/></g>
          <g class="axis"><path d="M36.500 328v30.500H67"/><text x="38" y="329">z</text><text x="68" y="359">x</text></g>
        </svg>
        <div class="vtitle"><b>Front</b><i></i><span></span></div>
      </section>
      <section class="view">
        <svg class="canvas" data-grid="right"></svg>
        <svg class="canvas"><g class="axis"><path d="M36.500 328v30.500H67"/><text x="38" y="329">z</text><text x="68" y="358">y</text></g></svg>
        <div class="vtitle"><b>Right</b><i></i><span></span></div>
      </section>
    </div>
    <nav class="vtabs"><a href="#" class="active">Perspective</a><a href="#">Top</a><a href="#">Front</a><a href="#">Right</a><button aria-label="New viewport"><svg viewBox="0 0 11 11"><path d="M4.500 1.500h2v3h3v2h-3v3h-2v-3h-3v-2h3z" fill="#fff" stroke="#777"/></svg></button></nav>
  </div>

  <aside class="props">
    <h2><span>Properties: View properties</span></h2>
    <div class="pbody">
      <div class="ptabs">
        <button class="active" aria-label="Properties"><svg viewBox="0 0 18 18" fill="none" stroke-width="4"><circle cx="9" cy="9" r="5" stroke="#fc0"/><path d="M9 4a5 5 0 0 1 5 5" stroke="#e33"/><path d="M14 9a5 5 0 0 1-4 5" stroke="#b2d"/><path d="M10 14a5 5 0 0 1-5-3" stroke="#26f"/><path d="M5 11a5 5 0 0 1 1-5" stroke="#2b5"/></svg></button>
        <button aria-label="Layers"><svg viewBox="0 0 18 18"><path d="M1 2l8 3 8-2v8l-8 6-7-6z" fill="#333"/><path d="M1 2l9 3 7-2-1 5-7 4-7-5z" fill="#f23a18"/><path d="M1 2l8-1 8 2-7 3z" fill="#ff7a52"/><path d="M3 10l6 4 7-4v1l-7 4-6-4z" fill="#eee"/></svg></button>
        <button aria-label="Rendering"><svg viewBox="0 0 18 18"><circle cx="8" cy="10" r="6.500" fill="url(#ball)"/><path d="M9 4l3-3h5v4l-5 1z" fill="#ddd" stroke="#222"/></svg></button>
        <button aria-label="Materials"><svg viewBox="0 0 18 18" stroke="#333"><path d="M12 3l3 2-9 10-3-1 1-3z" fill="#ccc"/><path d="M9 6l3 3-3 3-3-3z" fill="#e54a20"/></svg></button>
        <button aria-label="Libraries"><svg viewBox="0 0 18 18" stroke="#7a4a00"><path d="M2.500 14.500v-10h5l1 2h6v2" fill="#ffd65a"/><path d="M2.500 14.500l3-6h11l-3 6z" fill="#ffe28a"/></svg></button>
        <button aria-label="Help"><svg viewBox="0 0 18 18"><path d="M2.500 2.500h13v13h-13z" fill="#f4f4ff" stroke="#2b3f9e"/><path d="M2 2h14v3H2zM4 6h10v8H4z" fill="#3458c8"/><text x="6" y="14" class="q">?</text></svg></button>
        <button aria-label="Panel options"><svg viewBox="0 0 18 18" stroke="#bbb"><use href="#gear"/></svg></button>
      </div>
      <div class="pmodes">
        <button class="active" aria-label="Camera"><svg viewBox="0 0 28 28"><path d="M4 10l3-1 2-3h8l2 3h5v12l-2 1H5l-1-2z" fill="#333"/><circle cx="16" cy="15" r="5.500" fill="#aaa"/><circle cx="16" cy="15" r="4" fill="#111"/><circle cx="16" cy="15" r="2" fill="#555"/><path d="M6 11h4" stroke="#999"/></svg></button>
        <button aria-label="Material"><svg viewBox="0 0 28 28"><circle cx="10" cy="19" r="6.500" fill="url(#ball)"/><circle cx="17" cy="12" r="4.500" fill="url(#ball)"/><circle cx="21" cy="7" r="3.500" fill="url(#ball)"/></svg></button>
        <button aria-label="Detail frame"><svg viewBox="0 0 28 28"><path d="M2.500 3.500h23v21h-23z" fill="#c9cccf" stroke="#333"/><path d="M5.500 6.500h17v15h-17z" fill="#fff" stroke="#4bb4ea"/><path d="M7.500 8.500h14v11h-14z" fill="#fff" stroke="#e22"/></svg></button>
      </div>
      <form class="fields">
        <h3>Viewport</h3>
        <div class="row"><label for="f1">Title</label><input id="f1" value="Perspective"></div>
        <div class="row"><label for="f2">Width</label><input id="f2" value="521"></div>
        <div class="row"><label for="f3">Height</label><input id="f3" value="398"></div>
        <div class="row"><label for="f4">Projection</label><div class="pick"><select id="f4"><option>Perspective</option><option>Parallel</option></select><svg viewBox="0 0 19 19"><path d="M5 7l5 5 5-5" fill="none" stroke="#444"/></svg></div></div>
        <div class="row"><label for="f5">Locked</label><div class="tick"><input id="f5" type="checkbox"></div></div>
        <h3>Camera</h3>
        <div class="row"><label for="f6">Lens Length(mm)</label><input id="f6" value="50.0"></div>
        <div class="row"><label for="f7">Rotation</label><input id="f7" value="0.0"></div>
        <div class="row"><label for="f8">X Location</label><input id="f8" value="-5.991"></div>
        <div class="row"><label for="f9">Y Location</label><input id="f9" value="3.446"></div>
        <div class="row"><label for="f10">Z Location</label><input id="f10" value="12.461"></div>
        <div class="row"><label for="f11">Distance to Target</label><input id="f11" class="fixed" readonly value="41.251"></div>
        <div class="row"><label for="f12">Location</label><button id="f12" type="button" class="place">Place...</button></div>
        <h3>Target</h3>
        <div class="row"><label for="f13">X Target</label><input id="f13" value="28.661"></div>
        <div class="row"><label for="f14">Y Target</label><input id="f14" value="23.938"></div>
        <div class="row"><label for="f15">Z Target</label><input id="f15" value="3.463"></div>
        <div class="row"><label for="f16">Location</label><button id="f16" type="button" class="place">Place...</button></div>
        <h3>Wallpaper</h3>
        <div class="row"><label for="f17">Filename</label><div class="pick"><input id="f17" value="(none)"><button type="button" aria-label="Browse">...</button></div></div>
        <div class="row"><label for="f18">Show</label><div class="tick"><input id="f18" type="checkbox" checked></div></div>
        <div class="row"><label for="f19">Gray</label><div class="tick"><input id="f19" type="checkbox" checked></div></div>
      </form>
    </div>
  </aside>
</main>

<div class="osnap">
  <label><input type="checkbox">End</label><label><input type="checkbox" checked>Near</label><label><input type="checkbox">Point</label><label><input type="checkbox" checked>Mid</label><label><input type="checkbox" checked>Cen</label><label><input type="checkbox" checked>Int</label><label><input type="checkbox" checked>Perp</label><label><input type="checkbox" checked>Tan</label><label><input type="checkbox" checked>Quad</label><label><input type="checkbox">Knot</label><label><input type="checkbox" checked>Vertex</label><label class="wide"><input type="checkbox" disabled>Project</label><label class="wide"><input type="checkbox" disabled>Disable</label>
</div>
<footer class="status"><i></i><i></i><i></i><i></i><i></i><i class="layer"></i><i></i><i class="on"></i><i></i><i class="on"></i><i class="on"></i><i class="on"></i><i></i><i></i><i></i><i></i></footer>
<script src="grid.js"></script>
</body>
</html>
```
FILE: styles.css
```css
* { box-sizing: border-box; }
body { margin: 0; min-height: 100vh; display: flex; flex-direction: column; overflow: hidden; background: #eaebef; color: #222; font: 11px/15px "Open Sans", "Noto Sans", sans-serif; }
h1, h2, h3, p { margin: 0; font-size: 11px; font-weight: 400; }
a { color: inherit; text-decoration: none; }
button { padding: 0; border: 0; background: none; font: inherit; color: #000; }
input, select { font: inherit; color: inherit; min-width: 0; border: 0; border-radius: 0; margin: 0; padding: 0; }
svg { display: block; }
.defs { position: absolute; width: 0; height: 0; }

.titlebar { display: flex; align-items: flex-start; height: 14px; background: #fff; color: #000; }
.titlebar h1 { flex: 1; line-height: 11px; margin-left: 5px; white-space: nowrap; }
.logo { width: 17px; height: 14px; }
.winbtns { display: flex; gap: 33px; padding-right: 9px; }
.winbtns svg { width: 12px; height: 12px; fill: none; stroke: #000; }
.menu { display: flex; gap: 15px; height: 24px; padding: 8px 0 0; background: #fff; color: #000; }
.command { margin-top: 5px; background: #fff; color: #000; }
.history { display: flex; height: 44px; border-bottom: 1px solid #bcc5de; }
.log { flex: 1; padding-left: 1px; margin-top: -2px; }
.scroll { width: 9px; background: #f0f0f0; }
.scroll svg { width: 9px; height: 43px; }
.prompt { display: flex; height: 18px; padding-left: 1px; }
.prompt label { font-weight: 700; }
.caret { width: 1px; height: 15px; margin: 1px 0 0 3px; background: #000; }
.prompt input { flex: 1; outline: 0; }
.spin { width: 9px; height: 17px; }

.tabs { position: relative; display: flex; height: 22px; margin-top: 3px; padding: 4px 0 0 10px; border-top: 1px solid #d3d7e8; box-shadow: inset 0 -1px #bcc5de; color: #444; }
.tabs a { margin-right: 22px; height: 17px; white-space: nowrap; padding-top: 1px; }
.tabs a.active { position: relative; margin-left: -2px; margin-right: 8px; padding: 0 12px 0 0; background: #eaebef; border: solid #bcc5de; border-width: 1px 1px 0 0; border-radius: 0 3px 0 0; }
.slant { position: absolute; left: -14px; top: -1px; width: 14px; height: 17px; }
.tabgear { position: absolute; left: calc(100% - 8px); top: 3px; width: 16px; height: 16px; }

.toolbar { display: flex; height: 42px; padding-top: 1px; }
.toolbar button, .toolbar svg { width: 28px; height: 28px; }
.sep { width: 1px; height: 26px; margin: 2px 3px 0 2px; background: linear-gradient(#ebecf0, #aaa, #ebecf0); }

.work { display: flex; flex: 1; }
.tools { position: relative; display: grid; grid-template-columns: 28px 28px; grid-auto-rows: 28px; align-content: start; width: 57px; padding-top: 7px; overflow: hidden; }
.tools::before { content: ""; position: absolute; left: 0; top: 3px; width: 51px; height: 3px; border: solid #ccd3e6; border-width: 1px 0; }
.tools button { margin-left: -6px; width: 28px; height: 28px; }
.tools svg { width: 28px; height: 28px; }
.bigt { font: 700 23px "Liberation Serif", serif; fill: #4e70e0; stroke: #112; stroke-width: .7px; }

.center { flex: 1; display: flex; flex-direction: column; min-width: 0; }
.views { flex: 1; display: grid; grid-template-columns: 527fr 523fr; grid-template-rows: 400fr 396fr; gap: 2px; }
.view { position: relative; overflow: hidden; background: #9da3aa; border: 1px solid #bcc5de; min-width: 0; }
.canvas { position: absolute; left: 0; top: 0; width: 100%; height: 100%; }
.axis { fill: none; stroke: #5c6065; }
.axis text { font: 14px "Liberation Sans", sans-serif; fill: #5c6065; stroke: none; }
.vtitle { position: relative; display: inline-flex; align-items: center; height: 18px; padding: 0 2px 0 7px; background: #c9ccd2; color: #606468; border-radius: 0 0 3px 0; vertical-align: top; }
.vtitle b { font-weight: 700; }
.vtitle i { width: 1px; height: 14px; margin: 0 1px 0 8px; background: #555; }
.vtitle span { border: solid transparent; border-width: 4px 4px 0; border-top-color: #444; }
.vtitle.current { background: #869bee; color: #223; }

.palette { position: absolute; left: 124px; top: 115px; width: 180px; height: 140px; background: #eaebef; border: 1px solid #bcc5de; clip-path: polygon(12px 0, 100% 0, 100% 100%, 0 100%, 0 12px); }
.phead { display: flex; height: 19px; background: #869bee; }
.ptab { display: flex; align-items: center; width: 120px; gap: 5px; padding-left: 6px; background: #eaebef; white-space: nowrap; }
.ptab svg { width: 20px; height: 20px; }
.phead button { width: 16px; height: 19px; margin-left: 1px; color: #dfe5ff; font-weight: 700; font-size: 13px; }
.phead .ptab + button { margin-left: 23px; }
.phead button svg { width: 14px; height: 19px; }
.pgrid { display: grid; grid-template-columns: repeat(6, 28px); grid-auto-rows: 28px; padding-top: 2px; }
.pgrid svg { width: 28px; height: 28px; }
.pgrid text { font: 11px "Liberation Sans", sans-serif; }
.pgrid button:last-child { font-size: 16px; padding-left: 10px; }

.vtabs { display: flex; height: 20px; color: #222; }
.vtabs a { padding: 4px 0 0 9px; margin-right: 7px; }
.vtabs a.active { padding-right: 5px; margin-right: 0; border: solid #bcc5de; border-width: 0 1px 1px; border-radius: 0 0 3px 8px; }
.vtabs button { margin-left: 8px; padding-bottom: 0; }
.vtabs svg { width: 11px; height: 11px; }

.props { width: 261px; margin-left: 7px; padding: 0 0 2px; }
.props h2 { display: flex; align-items: center; gap: 4px; height: 20px; padding: 2px 0 0 3px; white-space: nowrap; }
.props h2::after { content: ""; flex: 1; height: 3px; border: solid #d3d7e8; border-width: 1px 0; }
.pbody { border: solid #bcc5de; border-width: 1px 0 1px 1px; min-height: 795px; }
.ptabs { display: flex; height: 20px; overflow: hidden; box-shadow: inset 0 -1px #bcc5de; }
.ptabs button { flex: none; width: 41px; padding-left: 11px; }
.ptabs button.active { width: 39px; padding-left: 9px; background: #eaebef; border-right: 1px solid #bcc5de; }
.ptabs svg { width: 18px; height: 18px; }
.q { font: 700 9px "Liberation Sans", sans-serif; fill: #fff; }
.pmodes { display: flex; gap: 4px; padding: 4px 6px 8px; }
.pmodes button { width: 28px; height: 28px; }
.pmodes button.active { background: #abbcee; }
.fields { color: #333; }
.fields h3 { height: 26px; margin-left: 8px; padding-top: 5px; font-size: 13px; border-bottom: 1px solid #dde0e8; }
.row { display: grid; grid-template-columns: 109px 1fr; height: 21px; margin-left: 23px; border-bottom: 1px solid #dde0e8; }
.row label { padding: 3px 0 0 4px; white-space: nowrap; }
.row > input, .pick, .tick, .place { border-left: 1px solid #dde0e8; }
.row > input { padding-left: 4px; background: #fff; width: 100%; }
.row > input.fixed { background: transparent; }
.pick { position: relative; display: flex; background: #fff; }
.pick select, .pick input { flex: 1; width: 50px; padding-left: 3px; background: #fff; appearance: none; }
.pick button, .pick svg { width: 19px; height: 19px; margin-right: 1px; background: #e1e1e1; border: 1px solid #adadad; line-height: 12px; }
.tick { padding: 3px 0 0 2px; }
.row .place { height: 19px; margin: 1px 1px 0 2px; background: #e1e1e1; border: 1px solid #adadad; }
input[type="checkbox"] { appearance: none; width: 13px; height: 13px; border: 1px solid #222; background: #fff; display: block; }
input[type="checkbox"]:checked::after { content: ""; display: block; width: 4px; height: 8px; margin: 0 0 0 4px; border: solid #222; border-width: 0 1px 1px 0; transform: rotate(40deg); }
input[type="checkbox"]:disabled { background: #ddd; border-color: #b5b5b5; }

.osnap { display: flex; gap: 8px; height: 29px; padding: 10px 0 0 2px; }
.osnap label { display: flex; align-items: center; gap: 3px; height: 15px; }
.osnap .wide { margin-left: 1px; }
.osnap .wide + .wide { margin-left: 8px; }
.status { display: grid; grid-template-columns: 43fr 88fr 89fr 88fr 88fr 167fr 66fr 46fr 47fr 48fr 73fr 57fr 92fr 40fr 327fr 18fr; height: 5px; border-top: 1px solid #bcc5de; }
.status i { border-right: 1px solid #bcc5de; }
.status .on { background: #cfd8f0; }
.status .layer { background: linear-gradient(#c00, #c00) 3px 2px / 14px 4px no-repeat; }
```
FILE: grid.js
```js
const NS = "http://www.w3.org/2000/svg";
const MINOR = "#92989f", MAJOR = "#82868d", RED = "#96494c", GREEN = "#449a44";

function stroke(parent, d, color, width, crisp) {
  const p = document.createElementNS(NS, "path");
  p.setAttribute("d", d);
  p.setAttribute("fill", "none");
  p.setAttribute("stroke", color);
  p.setAttribute("stroke-width", width);
  if (crisp) p.setAttribute("shape-rendering", "crispEdges");
  parent.append(p);
  return p;
}

// Orthographic views: origin and spacing of the construction plane in pixels.
const planes = {
  top: { x: 254, y: 357, step: 5.86 },
  front: { x: -310, y: 203, step: 20.7 },
  right: { x: 382, y: 100, step: 8.93 }
};

function drawPlane(svg, g) {
  const w = svg.clientWidth, h = svg.clientHeight;
  let minor = "", major = "";
  for (let i = -200; i <= 200; i++) {
    const x = Math.floor(g.x + i * g.step) + 0.5, y = Math.floor(g.y + i * g.step) + 0.5;
    let d = "";
    if (x > 0 && x < w) d += `M${x} 0V${h}`;
    if (y > 0 && y < h) d += `M0 ${y}H${w}`;
    if (i % 10) minor += d; else major += d;
  }
  stroke(svg, minor, MINOR, 1, true);
  stroke(svg, major, MAJOR, 1, true);
  stroke(svg, `M${Math.max(0, g.x)} ${g.y}H${w}`, RED, 2, true);
  stroke(svg, `M${g.x} ${g.y}V0`, GREEN, 2, true);
}

// Perspective view: camera values as listed in the properties panel.
function drawPerspective(svg) {
  const cam = [-5.991, 3.446, 12.461], tgt = [28.661, 23.938, 3.463];
  const f = tgt.map((v, i) => v - cam[i]);
  const len = Math.hypot(...f), flat = Math.hypot(f[0], f[1]);
  const F = f.map(v => v / len), R = [f[1] / flat, -f[0] / flat, 0];
  const U = [R[1] * F[2] - R[2] * F[1], R[2] * F[0] - R[0] * F[2], R[0] * F[1] - R[1] * F[0]];
  const dot = (a, b) => a[0] * b[0] + a[1] * b[1] + a[2] * b[2];
  const view = (x, y) => { const r = [x - cam[0], y - cam[1], -cam[2]]; return [dot(r, R), dot(r, U), dot(r, F)]; };
  const focal = 199 * 50 / 12;
  const seg = (a, b) => {
    if (a[2] < 1 && b[2] < 1) return "";
    if (a[2] < 1) [a, b] = [b, a];
    if (b[2] < 1) { const t = (a[2] - 1) / (a[2] - b[2]); b = a.map((v, i) => v + t * (b[i] - v)); }
    const s = p => (260.5 + focal * p[0] / p[2]).toFixed(1) + " " + (199 - focal * p[1] / p[2]).toFixed(1);
    return "M" + s(a) + "L" + s(b);
  };
  let minor = "", major = "";
  for (let i = -200; i <= 200; i++) {
    const d = seg(view(i, -200), view(i, 200)) + seg(view(-200, i), view(200, i));
    if (i % 10) minor += d; else major += d;
  }
  stroke(svg, minor, "#959ba2", 1);
  stroke(svg, major, "#83878e", 1);
}

// Curved slab: wires interpolated between its near and far edge curves.
function drawSlab(g) {
  const near = [[79, 261], [112, 252], [145, 262], [176, 280]];
  const far = [[242, 201], [268, 193], [300, 198], [316, 216]];
  const row = s => near.map((p, i) => [p[0] + (far[i][0] - p[0]) * s, p[1] + (far[i][1] - p[1]) * s]);
  const curve = c => `M${c[0]}C${c[1]} ${c[2]} ${c[3]}`;
  const at = (c, t) => [0, 1].map(k => (1 - t) ** 3 * c[0][k] + 3 * t * (1 - t) ** 2 * c[1][k] + 3 * t * t * (1 - t) * c[2][k] + t ** 3 * c[3][k]);
  const body = stroke(g, "M79 261L242 202Q268 194 289 200Q310 208 316 215Q318 219 313 221L184 279Q172 284 152 273Q125 257 100 258Q90 258 79 261z", "#cc0000", 3);
  body.setAttribute("fill", "#4d0509");
  let d = "";
  for (let i = 1; i < 9; i++) d += curve(row(i / 9 + 0.01));
  for (let i = 1; i < 8; i++) d += `M${at(near, i / 8)}L${at(far, i / 8)}`;
  stroke(g, d, "#cc0000", 1.2);
}

document.querySelectorAll("[data-grid]").forEach(svg => {
  const kind = svg.dataset.grid;
  if (kind === "perspective") drawPerspective(svg); else drawPlane(svg, planes[kind]);
});
drawSlab(document.getElementById("slab"));
```
